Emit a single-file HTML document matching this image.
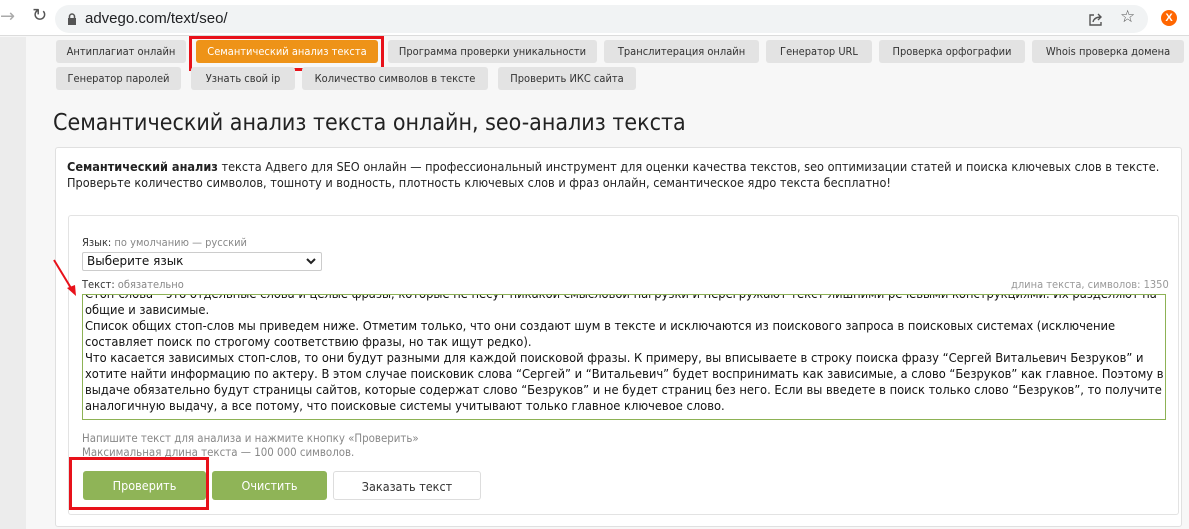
<!DOCTYPE html>
<html><head><meta charset="utf-8"><style>
*{margin:0;padding:0;box-sizing:border-box}
html,body{width:1189px;height:529px;overflow:hidden}
body{background:#f7f7f7;font-family:"DejaVu Sans","Liberation Sans",sans-serif;position:relative}
.bar{position:absolute;left:0;top:0;width:1189px;height:36px;background:#fff;border-bottom:1px solid #dcdcdc}
.addr{position:absolute;left:55px;top:5px;width:1093px;height:28px;border-radius:14px;background:#f1f3f4}
.addr span{position:absolute;left:30px;top:5px;font:15px "Liberation Sans",sans-serif;color:#202124}
.lstrip{position:absolute;left:0;top:37px;width:26px;height:492px;background:#ececec}
.tab{position:absolute;height:23px;background:#e3e3e3;border-radius:3px;font-size:11px;color:#333;text-align:center;line-height:23px;font-family:"DejaVu Sans Condensed","DejaVu Sans",sans-serif}
.red{position:absolute;border:3px solid #e8111a}
h1{position:absolute;left:53px;top:110px;font:normal 23px "DejaVu Sans Condensed","DejaVu Sans",sans-serif;color:#222}
.card{position:absolute;left:55px;top:147px;width:1127px;height:380px;background:#fff;border:1px solid #e0e0e0;border-radius:3px}
.desc{position:absolute;left:67px;top:159px;font:12.6px/16px "DejaVu Sans Condensed","DejaVu Sans",sans-serif;color:#222;width:1115px;white-space:nowrap}
.inner{position:absolute;left:68px;top:215px;width:1111px;height:300px;border:1px solid #e3e3e3;border-radius:3px}
.lbl{position:absolute;font:11px "DejaVu Sans Condensed","DejaVu Sans",sans-serif;color:#333}
.lbl i{font-style:normal;color:#888}
.sel{position:absolute;left:82px;top:252px;width:240px;height:19px;border:1px solid #ccc;border-radius:2px;font:12px "DejaVu Sans",sans-serif;padding:1px 4px;color:#111}
.ta{position:absolute;left:82px;top:294px;width:1084px;height:126px;border:1px solid #8db255;overflow:hidden}
.ta div{position:absolute;left:2px;top:-8px;width:1078px;font:12.8px/16px "DejaVu Sans Condensed","DejaVu Sans",sans-serif;color:#111;white-space:nowrap}
.hint{position:absolute;left:82px;top:431px;font:11.4px/14px "DejaVu Sans Condensed","DejaVu Sans",sans-serif;color:#888}
.btn{position:absolute;top:471px;height:29px;border-radius:3px;font:12.5px/29px "DejaVu Sans Condensed","DejaVu Sans",sans-serif;text-align:center}
.g{background:#8fb457;color:#fff}
</style></head><body>
<div class="bar">
<span style="position:absolute;left:0;top:6px;font-size:18px;color:#aaa">→</span>
<span style="position:absolute;left:32px;top:5px;font-size:18px;color:#555">↻</span>
<div class="addr"><svg style="position:absolute;left:12px;top:8px" width="10" height="12"><rect x="1" y="5" width="8" height="7" fill="#555"/><path d="M2.5 5V3.5a2.5 2.5 0 0 1 5 0V5" stroke="#555" fill="none" stroke-width="1.5"/></svg><span>advego.com/text/seo/</span>
<svg style="position:absolute;left:1033px;top:7px" width="16" height="15"><path d="M6 3H2v10h11v-3" stroke="#555" fill="none" stroke-width="1.4"/><path d="M5 10c1-4 4-5 8-5M10 2l3 3-3 3" stroke="#555" fill="none" stroke-width="1.4"/></svg>
<span style="left:1065px;top:2px;font-size:17px;color:#555">☆</span></div>
<div style="position:absolute;left:1161px;top:10px;width:16px;height:16px;border-radius:50%;background:#f60;color:#fff;font:bold 11px/16px sans-serif;text-align:center">X</div>
</div>
<div class="lstrip"></div>
<div class="tab" style="left:56px;top:40px;width:130px">Антиплагиат онлайн</div>
<div class="tab" style="left:196px;top:40px;width:182px;background:#ee9318;color:#fff">Семантический анализ текста</div>
<div class="red" style="left:189px;top:36px;width:195px;height:35px"></div>
<div class="tab" style="left:388px;top:40px;width:209px">Программа проверки уникальности</div>
<div class="tab" style="left:604px;top:40px;width:155px">Транслитерация онлайн</div>
<div class="tab" style="left:766px;top:40px;width:106px">Генератор URL</div>
<div class="tab" style="left:879px;top:40px;width:146px">Проверка орфографии</div>
<div class="tab" style="left:1032px;top:40px;width:152px">Whois проверка домена</div>
<div class="tab" style="left:56px;top:67px;width:125px">Генератор паролей</div>
<div class="tab" style="left:191px;top:67px;width:104px">Узнать свой ip</div>
<div class="tab" style="left:302px;top:67px;width:186px">Количество символов в тексте</div>
<div class="tab" style="left:498px;top:67px;width:138px">Проверить ИКС сайта</div>
<h1>Семантический анализ текста онлайн, seo-анализ текста</h1>
<div class="card"></div>
<div class="desc"><b>Семантический анализ</b> текста Адвего для SEO онлайн — профессиональный инструмент для оценки качества текстов, seo оптимизации статей и поиска ключевых слов в тексте.<br>Проверьте количество символов, тошноту и водность, плотность ключевых слов и фраз онлайн, семантическое ядро текста бесплатно!</div>
<div class="inner"></div>
<div class="lbl" style="left:82px;top:236px">Язык: <i>по умолчанию — русский</i></div>
<div class="sel">Выберите язык<svg style="position:absolute;right:5px;top:5px" width="10" height="7"><path d="M1 1l4 4 4-4" stroke="#222" stroke-width="2" fill="none"/></svg></div>
<div class="lbl" style="left:82px;top:278px">Текст: <i>обязательно</i></div>
<div class="lbl" style="left:1011px;top:278px;color:#999">длина текста, символов: 1350</div>
<svg style="position:absolute;left:52px;top:258px" width="26" height="40"><path d="M2 2L22 35" stroke="#e8111a" stroke-width="2"/><path d="M24 38L15 30L23 27Z" fill="#e8111a"/></svg>
<div class="ta"><div>Стоп-слова – это отдельные слова и целые фразы, которые не несут никакой смысловой нагрузки и перегружают текст лишними речевыми конструкциями. Их разделяют на<br>общие и зависимые.<br>Список общих стоп-слов мы приведем ниже. Отметим только, что они создают шум в тексте и исключаются из поискового запроса в поисковых системах (исключение<br>составляет поиск по строгому соответствию фразы, но так ищут редко).<br>Что касается зависимых стоп-слов, то они будут разными для каждой поисковой фразы. К примеру, вы вписываете в строку поиска фразу “Сергей Витальевич Безруков” и<br>хотите найти информацию по актеру. В этом случае поисковик слова “Сергей” и “Витальевич” будет воспринимать как зависимые, а слово “Безруков” как главное. Поэтому в<br>выдаче обязательно будут страницы сайтов, которые содержат слово “Безруков” и не будет страниц без него. Если вы введете в поиск только слово “Безруков”, то получите<br>аналогичную выдачу, а все потому, что поисковые системы учитывают только главное ключевое слово.</div></div>
<div class="hint">Напишите текст для анализа и нажмите кнопку «Проверить»<br>Максимальная длина текста — 100 000 символов.</div>
<div class="btn g" style="left:83px;width:123px">Проверить</div>
<div class="btn g" style="left:212px;width:115px">Очистить</div>
<div class="btn" style="left:333px;width:148px;border:1px solid #ddd;color:#333;background:#fff">Заказать текст</div>
<div class="red" style="left:69px;top:457px;width:140px;height:53px"></div>
</body></html>
